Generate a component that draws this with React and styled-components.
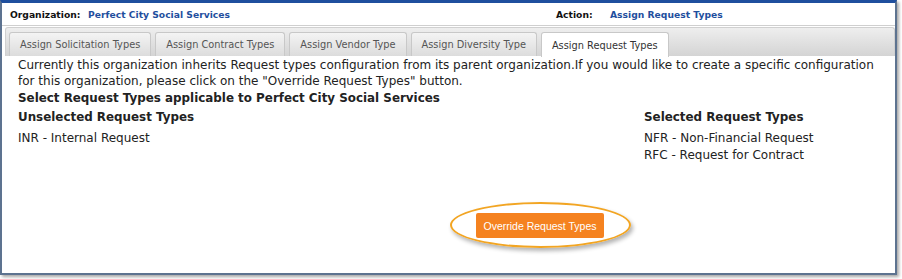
import React from "react";
import styled, { createGlobalStyle } from "styled-components";

const Global = createGlobalStyle`
  html, body { margin: 0; padding: 0; background: #fff; }
  body { width: 902px; height: 279px; overflow: hidden; font-family: "DejaVu Sans", Verdana, sans-serif; }
`;

const Frame = styled.div`
  box-sizing: border-box;
  width: 897px;
  height: 275px;
  border: 2px solid #5d7390;
  border-top: 3px solid #1f4f9e;
  box-shadow: 2px 2px 3px rgba(0, 0, 0, 0.35);
  background: #fff;
  display: flex;
  flex-direction: column;
`;

const Header = styled.div`
  height: 22px;
  display: flex;
  align-items: center;
  padding-left: 8px;
  font-size: 9.2px;
  font-weight: bold;
  border-bottom: 1px solid #cfcfcf;
`;

const HeaderGroup = styled.div`
  display: flex;
  width: ${(p) => p.$w || "auto"};
`;

const Label = styled.span`
  color: #111;
  width: ${(p) => p.$w};
`;

const Value = styled.span`
  color: #1f4f9e;
`;

const TabStrip = styled.div`
  margin: 1px 0 0 3px;
  height: 28px;
  display: flex;
  align-items: flex-end;
  gap: 4px;
  padding-left: 3px;
  background: linear-gradient(#eeeeee, #d4d4d4);
  border: 1px solid #d0d0d0;
  border-bottom: none;
  border-radius: 3px 3px 0 0;
`;

const Tab = styled.div`
  box-sizing: border-box;
  height: 24px;
  padding: 0 10px;
  display: flex;
  align-items: center;
  font-size: 9.8px;
  border: 1px solid #c8c8c8;
  border-bottom: none;
  border-radius: 3px 3px 0 0;
  background: ${(p) => (p.$active ? "#fff" : "linear-gradient(#f4f4f4, #dcdcdc)")};
  color: ${(p) => (p.$active ? "#333" : "#555")};
  margin-bottom: ${(p) => (p.$active ? "-1px" : "0")};
  height: ${(p) => (p.$active ? "25px" : "24px")};
`;

const Content = styled.div`
  padding: 1px 0 0 16px;
  font-size: 12px;
  line-height: 16px;
  color: #222;
`;

const Para = styled.div`
  width: 870px;
`;

const Heading = styled.div`
  font-weight: bold;
  font-size: 11.9px;
  line-height: 18px;
`;

const Columns = styled.div`
  display: flex;
  margin-top: 1px;
`;

const Column = styled.div`
  width: ${(p) => p.$w};
  display: flex;
  flex-direction: column;
  gap: 4px;
`;

const Items = styled.div`
  display: flex;
  flex-direction: column;
  line-height: 17px;
`;

const ButtonRow = styled.div`
  display: flex;
  margin-top: 38px;
  padding-left: 432px;
`;

const Highlight = styled.div`
  padding: 9px 25px 8px 24px;
  border: 2px solid #f2a523;
  border-radius: 50%;
  box-shadow: 2px 3px 4px rgba(0, 0, 0, 0.3);
`;

const Button = styled.button`
  display: block;
  background: #f58220;
  color: #fff;
  border: none;
  border-radius: 2px;
  height: 25px;
  width: 128px;
  padding: 0;
  font-family: "Liberation Sans", Arial, sans-serif;
  font-size: 10.5px;
`;

export default function App() {
  const tabs = [
    "Assign Solicitation Types",
    "Assign Contract Types",
    "Assign Vendor Type",
    "Assign Diversity Type",
    "Assign Request Types",
  ];
  return (
    <>
      <Global />
      <Frame>
        <Header>
          <HeaderGroup $w="546px">
            <Label $w="78px">Organization:</Label>
            <Value>Perfect City Social Services</Value>
          </HeaderGroup>
          <HeaderGroup>
            <Label $w="54px">Action:</Label>
            <Value>Assign Request Types</Value>
          </HeaderGroup>
        </Header>
        <TabStrip>
          {tabs.map((t, i) => (
            <Tab key={t} $active={i === 4}>
              {t}
            </Tab>
          ))}
        </TabStrip>
        <Content>
          <Para>
            Currently this organization inherits Request types configuration from its parent organization.If you would like to create a specific configuration for this organization, please click on the "Override Request Types" button.
          </Para>
          <Heading>Select Request Types applicable to Perfect City Social Services</Heading>
          <Columns>
            <Column $w="626px">
              <Heading>Unselected Request Types</Heading>
              <Items>
                <div>INR - Internal Request</div>
              </Items>
            </Column>
            <Column>
              <Heading>Selected Request Types</Heading>
              <Items>
                <div>NFR - Non-Financial Request</div>
                <div>RFC - Request for Contract</div>
              </Items>
            </Column>
          </Columns>
          <ButtonRow>
            <Highlight>
              <Button>Override Request Types</Button>
            </Highlight>
          </ButtonRow>
        </Content>
      </Frame>
    </>
  );
}
